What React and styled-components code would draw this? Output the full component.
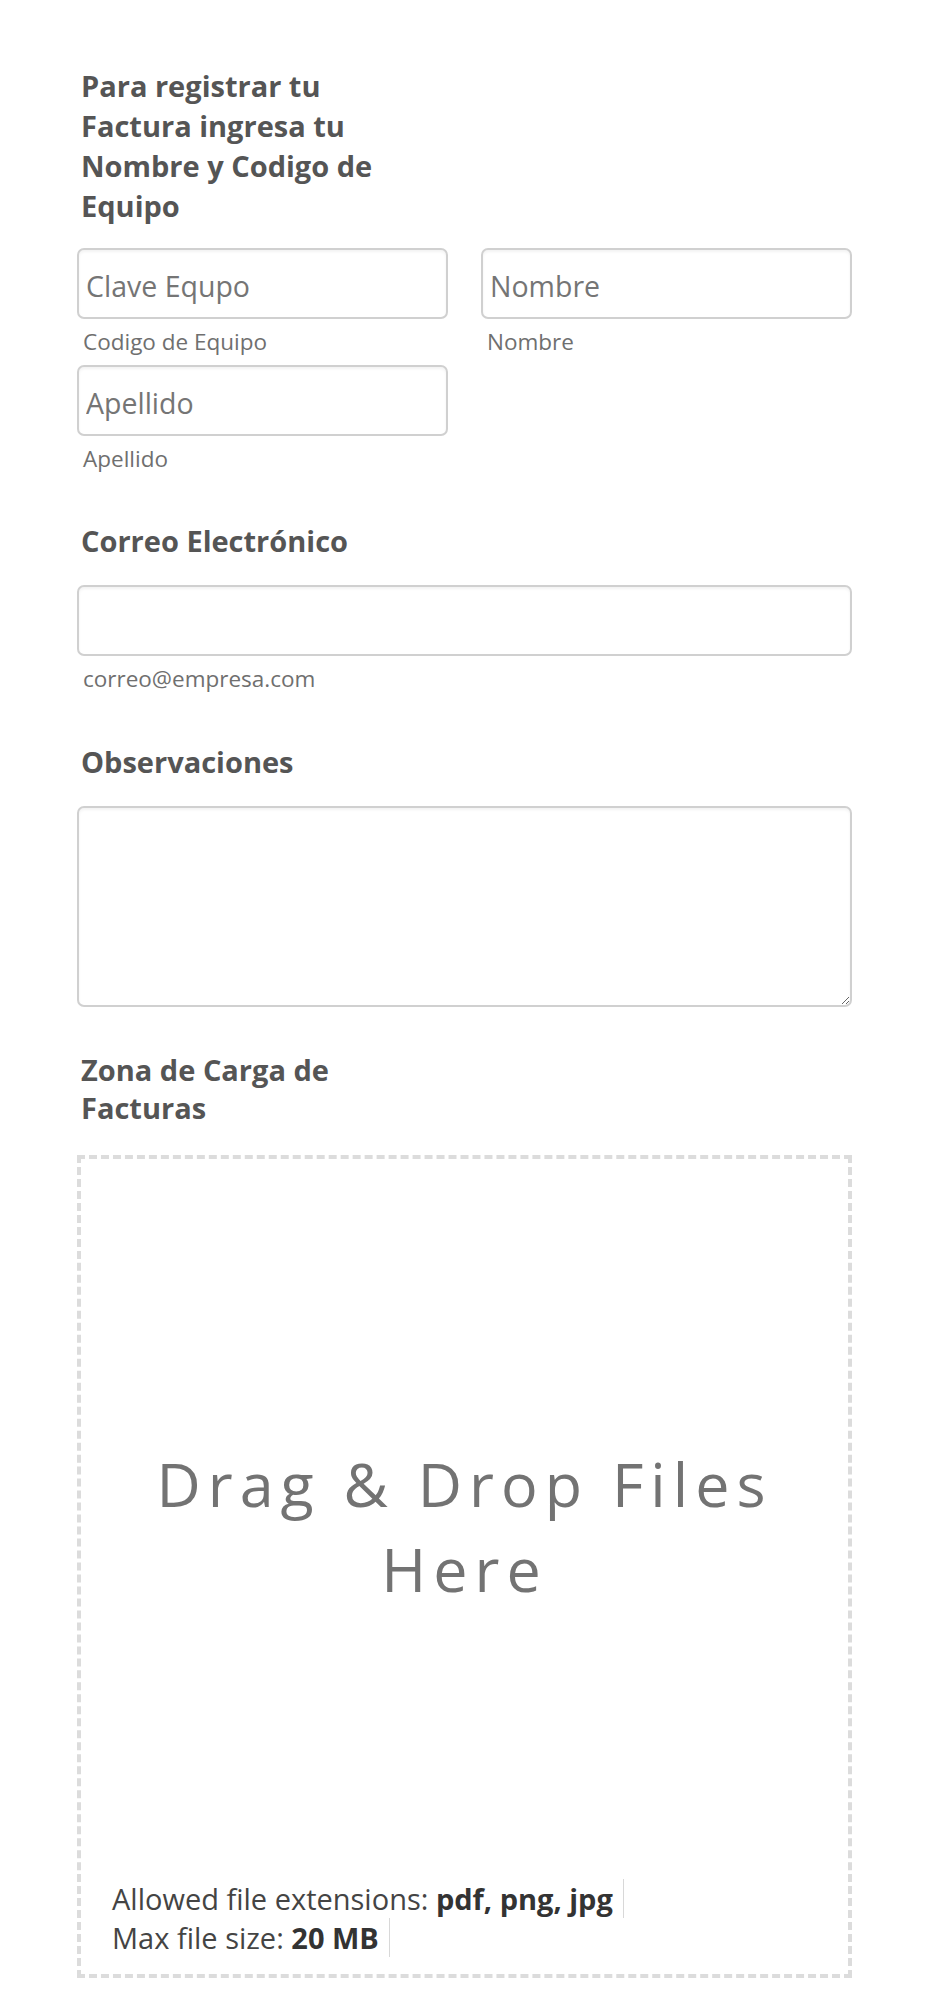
import styled, { createGlobalStyle } from 'styled-components';

const GlobalStyle = createGlobalStyle`
    body {
        margin: 0;
        background: #fff;
        font-family: "Open Sans", "Liberation Sans", sans-serif;
    }
`;

const Form = styled.form`
    display: flex;
    flex-direction: column;
    width: 775px;
    margin-left: 77px;
    padding: 66px 0 36px;
`;

const Section = styled.div`
    display: flex;
    flex-direction: column;
    margin-bottom: ${props => props.$gap || '50px'};
`;

const Label = styled.label`
    display: block;
    max-width: 320px;
    padding-left: 4px;
    margin-bottom: ${props => props.$gap || '25px'};
    font-size: 29px;
    font-weight: 700;
    line-height: ${props => props.$lh || '38px'};
    color: #555;
`;

const FieldRow = styled.div`
    display: grid;
    grid-template-columns: 1fr 1fr;
    column-gap: 33px;
    row-gap: 9px;
`;

const FieldCell = styled.div`
    display: flex;
    flex-direction: column;
`;

const TextInput = styled.input`
    box-sizing: border-box;
    width: 100%;
    height: 71px;
    padding: 4px 7px 0;
    border: 2px solid #d0d0d0;
    border-radius: 7px;
    box-shadow: inset 0 2px 3px rgba(0, 0, 0, 0.05);
    font-family: "Open Sans", sans-serif;
    font-size: 28.5px;
    color: #555;
    outline: none;

    &::placeholder {
        color: #757575;
        opacity: 1;
    }
`;

const TextArea = styled.textarea`
    box-sizing: border-box;
    width: 100%;
    height: 201px;
    padding: 7px;
    border: 2px solid #d0d0d0;
    border-radius: 7px;
    box-shadow: inset 0 2px 3px rgba(0, 0, 0, 0.05);
    font-family: "Open Sans", sans-serif;
    font-size: 28.5px;
    color: #555;
    outline: none;
`;

const SubLabel = styled.span`
    display: block;
    margin-top: 8px;
    padding-left: 6px;
    font-size: 22.5px;
    line-height: 29px;
    color: #6f6f6f;
`;

const DropZone = styled.div`
    box-sizing: border-box;
    display: flex;
    flex-direction: column;
    height: 823px;
    border: 4px dashed #dcdcdc;
`;

const DropText = styled.div`
    flex: 1;
    display: flex;
    align-items: center;
    justify-content: center;
    padding: 14px 30px 0;
    text-align: center;
    font-size: 61px;
    line-height: 85px;
    letter-spacing: 7px;
    color: #737373;
`;

const UploadInfo = styled.div`
    padding: 0 31px 17px;
    font-size: 29px;
    line-height: 39px;
    color: #444;
`;

const InfoLine = styled.div`
    display: flex;
`;

const InfoText = styled.span`
    padding-right: 10px;
    border-right: 1px solid #d8d8d8;

    b {
        color: #333;
        font-weight: 700;
    }
`;

function App() {
    return (
        <>
            <GlobalStyle />
            <Form onSubmit={e => e.preventDefault()}>
                <Section $gap="49px">
                    <Label $lh="40px" $gap="22px">
                        Para registrar tu Factura ingresa tu Nombre y Codigo de Equipo
                    </Label>
                    <FieldRow>
                        <FieldCell>
                            <TextInput placeholder="Clave Equpo" />
                            <SubLabel>Codigo de Equipo</SubLabel>
                        </FieldCell>
                        <FieldCell>
                            <TextInput placeholder="Nombre" />
                            <SubLabel>Nombre</SubLabel>
                        </FieldCell>
                        <FieldCell>
                            <TextInput placeholder="Apellido" />
                            <SubLabel>Apellido</SubLabel>
                        </FieldCell>
                    </FieldRow>
                </Section>

                <Section $gap="50px">
                    <Label>Correo Electrónico</Label>
                    <TextInput type="email" />
                    <SubLabel>correo@empresa.com</SubLabel>
                </Section>

                <Section $gap="44px">
                    <Label>Observaciones</Label>
                    <TextArea />
                </Section>

                <Section $gap="0">
                    <Label $gap="28px">Zona de Carga de Facturas</Label>
                    <DropZone>
                        <DropText>Drag &amp; Drop Files Here</DropText>
                        <UploadInfo>
                            <InfoLine>
                                <InfoText>Allowed file extensions: <b>pdf, png, jpg</b></InfoText>
                            </InfoLine>
                            <InfoLine>
                                <InfoText>Max file size: <b>20 MB</b></InfoText>
                            </InfoLine>
                        </UploadInfo>
                    </DropZone>
                </Section>
            </Form>
        </>
    );
}

export default App;
